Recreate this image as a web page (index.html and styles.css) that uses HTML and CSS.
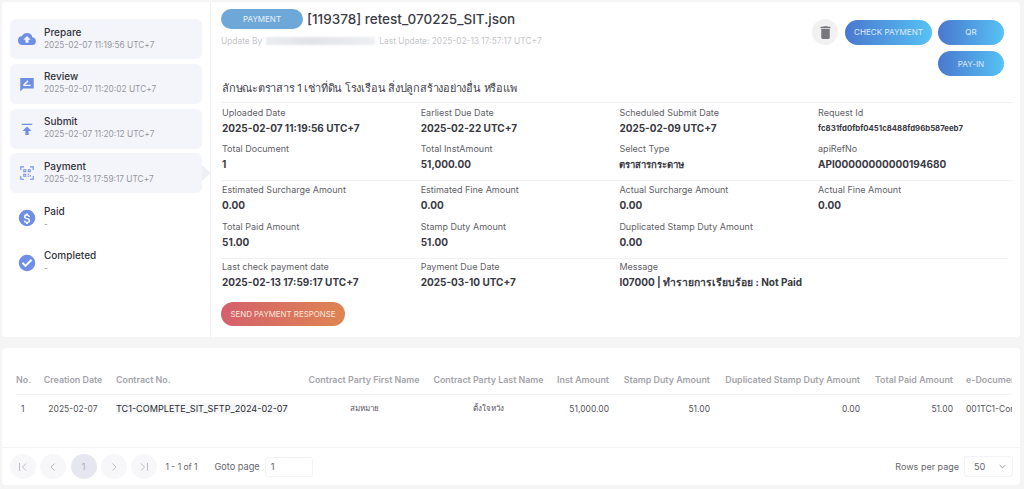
FILE: index.html
```html
<!DOCTYPE html>
<html lang="en">
<head>
<meta charset="utf-8">
<title>Payment</title>
<link rel="stylesheet" href="styles.css">
</head>
<body>
<section class="card top">
  <aside class="steps">
    <div class="step on">
      <svg class="ico" viewBox="0 0 24 24"><path d="M19.350 10.040A7.490 7.490 0 0 0 12 4a7.500 7.500 0 0 0-6.650 4.040A6 6 0 0 0 6 20h13a5 5 0 0 0 .35-9.960zM14 13v4h-4v-4H7l5-5 5 5h-3z"/></svg>
      <div class="step-text"><div class="step-name">Prepare</div><div class="step-time">2025-02-07 11:19:56 UTC+7</div></div>
    </div>
    <div class="step on">
      <svg class="ico" viewBox="0 0 24 24"><path d="M3 4h18v14H7l-4 4zM7 14.500h10V13H9.500l4.500-4.500-1.500-1.500L7 12.500z" fill-rule="evenodd"/></svg>
      <div class="step-text"><div class="step-name">Review</div><div class="step-time">2025-02-07 11:20:02 UTC+7</div></div>
    </div>
    <div class="step on">
      <svg class="ico" viewBox="0 0 24 24"><path d="M5 5h14v1.800H5zM12 8.500l-6 6h3.800V20h4.400v-5.500H18z"/></svg>
      <div class="step-text"><div class="step-name">Submit</div><div class="step-time">2025-02-07 11:20:12 UTC+7</div></div>
    </div>
    <div class="step on">
      <svg class="ico" viewBox="0 0 24 24"><path d="M3 8V3h5v1.500H4.500V8zM16 3h5v5h-1.500V4.500H16zM3 16h1.500v3.500H8V21H3zM21 16v5h-5v-1.500h3.500V16zM7 7h4v4H7zm1.200 1.200v1.600h1.600V8.200zM13 7h4v4h-4zm1.200 1.200v1.600h1.600V8.200zM7 13h4v4H7zm1.200 1.200v1.600h1.600v-1.600zM13 13h1.500v1.500H13zM15.500 14.500H17V17h-1.500zM13 15.500h1.500V17H13z"/></svg>
      <div class="step-text"><div class="step-name">Payment</div><div class="step-time">2025-02-13 17:59:17 UTC+7</div></div>
      <span class="arrow"></span>
    </div>
    <div class="step">
      <svg class="ico" viewBox="0 0 24 24"><path d="M12 1a11 11 0 1 0 0 22 11 11 0 0 0 0-22zm1.300 17.400V20h-2.500v-1.600c-1.600-.3-3-1.300-3.100-3.200h1.900c.1 1 .8 1.800 2.500 1.800 1.800 0 2.200-.9 2.200-1.500 0-.8-.4-1.500-2.500-2-2.300-.6-3.900-1.500-3.900-3.500 0-1.600 1.300-2.700 2.900-3V5.900h2.500v1.700c1.700.4 2.600 1.700 2.600 3.100h-1.900c-.1-1-.6-1.700-2-1.700-1.300 0-2.100.6-2.100 1.400 0 .8.600 1.200 2.500 1.700 1.900.5 3.900 1.300 3.900 3.700 0 1.700-1.300 2.700-3 3z"/></svg>
      <div class="step-text"><div class="step-name">Paid</div><div class="step-time">-</div></div>
    </div>
    <div class="step">
      <svg class="ico" viewBox="0 0 24 24"><path d="M12 1a11 11 0 1 0 0 22 11 11 0 0 0 0-22zm-2 16.500L5 12.500l1.800-1.800 3.200 3.200 7.200-7.200L19 8.500z"/></svg>
      <div class="step-text"><div class="step-name">Completed</div><div class="step-time">-</div></div>
    </div>
  </aside>
  <div class="main">
    <header class="head">
      <div class="head-left">
        <div class="title-row"><span class="badge">PAYMENT</span><h1 class="title">[119378] retest_070225_SIT.json</h1></div>
        <div class="update"><span>Update By</span><span class="redact"></span><span>Last Update: 2025-02-13 17:57:17 UTC+7</span></div>
      </div>
      <div class="actions">
        <div class="action-row">
          <span class="trash"><svg viewBox="0 0 24 24"><path d="M6 19a2 2 0 0 0 2 2h8a2 2 0 0 0 2-2V7H6zM19 4h-3.500l-1-1h-5l-1 1H5v2h14z"/></svg></span>
          <span class="btn blue check">CHECK PAYMENT</span>
          <span class="btn blue wide">QR</span>
        </div>
        <span class="btn blue wide">PAY-IN</span>
      </div>
    </header>
    <h2 class="doc">ลักษณะตราสาร 1 เช่าที่ดิน โรงเรือน สิ่งปลูกสร้างอย่างอื่น หรือแพ</h2>
    <div class="grid first">
      <div class="f"><div class="l">Uploaded Date</div><div class="v">2025-02-07 11:19:56 UTC+7</div></div>
      <div class="f"><div class="l">Earliest Due Date</div><div class="v">2025-02-22 UTC+7</div></div>
      <div class="f"><div class="l">Scheduled Submit Date</div><div class="v">2025-02-09 UTC+7</div></div>
      <div class="f"><div class="l">Request Id</div><div class="v small">fc831fd0fbf0451c8488fd96b587eeb7</div></div>
      <div class="f"><div class="l">Total Document</div><div class="v">1</div></div>
      <div class="f"><div class="l">Total InstAmount</div><div class="v">51,000.00</div></div>
      <div class="f"><div class="l">Select Type</div><div class="v"><span class="thai">ตราสารกระดาษ</span></div></div>
      <div class="f"><div class="l">apiRefNo</div><div class="v">API00000000000194680</div></div>
    </div>
    <div class="grid second">
      <div class="f"><div class="l">Estimated Surcharge Amount</div><div class="v">0.00</div></div>
      <div class="f"><div class="l">Estimated Fine Amount</div><div class="v">0.00</div></div>
      <div class="f"><div class="l">Actual Surcharge Amount</div><div class="v">0.00</div></div>
      <div class="f"><div class="l">Actual Fine Amount</div><div class="v">0.00</div></div>
      <div class="f"><div class="l">Total Paid Amount</div><div class="v">51.00</div></div>
      <div class="f"><div class="l">Stamp Duty Amount</div><div class="v">51.00</div></div>
      <div class="f"><div class="l">Duplicated Stamp Duty Amount</div><div class="v">0.00</div></div>
    </div>
    <div class="grid last">
      <div class="f"><div class="l">Last check payment date</div><div class="v">2025-02-13 17:59:17 UTC+7</div></div>
      <div class="f"><div class="l">Payment Due Date</div><div class="v">2025-03-10 UTC+7</div></div>
      <div class="f span2"><div class="l">Message</div><div class="v">I07000 | <span class="thai msg">ทำรายการเรียบร้อย</span> : Not Paid</div></div>
    </div>
    <div class="send"><span class="btn orange">SEND PAYMENT RESPONSE</span></div>
  </div>
</section>
<section class="card bottom">
  <div class="table">
    <div class="tr th">
      <span>No.</span><span class="c">Creation Date</span><span>Contract No.</span><span class="c">Contract Party First Name</span><span class="c">Contract Party Last Name</span><span class="r">Inst Amount</span><span class="r">Stamp Duty Amount</span><span class="r">Duplicated Stamp Duty Amount</span><span class="r">Total Paid Amount</span><span>e-Document</span>
    </div>
    <div class="tr td">
      <span class="n">1</span><span class="c">2025-02-07</span><span class="contract">TC1-COMPLETE_SIT_SFTP_2024-02-07</span><span class="c thai-cell">สมหมาย</span><span class="c thai-cell">ตั้งใจหวัง</span><span class="r">51,000.00</span><span class="r">51.00</span><span class="r">0.00</span><span class="r">51.00</span><span>001TC1-Complete</span>
    </div>
  </div>
  <footer class="pager">
    <span class="pg"><svg viewBox="0 0 10 10"><path d="M1.500 1v8M8 1.500L4.500 5 8 8.500"/></svg></span>
    <span class="pg"><svg viewBox="0 0 10 10"><path d="M6.500 1.500L3 5l3.500 3.500"/></svg></span>
    <span class="pg cur">1</span>
    <span class="pg"><svg viewBox="0 0 10 10"><path d="M3.500 1.500L7 5 3.500 8.500"/></svg></span>
    <span class="pg"><svg viewBox="0 0 10 10"><path d="M8.500 1v8M2 1.500L5.500 5 2 8.500"/></svg></span>
    <span class="count">1 - 1 of 1</span>
    <span class="goto">Goto page</span>
    <span class="input">1</span>
    <span class="rows">Rows per page</span>
    <span class="select">50<svg viewBox="0 0 10 6"><path d="M1 1l4 4 4-4" fill="none" stroke="#777" stroke-width="1"/></svg></span>
  </footer>
</section>
</body>
</html>
```
FILE: styles.css
```css
* { box-sizing: border-box; }
html, body { margin: 0; height: 489px; overflow: hidden; }
body {
  background: #f6f5f6;
  padding: 2px 4px 0 2px;
  font-family: Inter, "Noto Sans", "Noto Sans CJK SC", sans-serif;
  color: #3a3a44;
}
.card { background: #fff; border-radius: 4px; }
.top { display: flex; height: 335px; }
.bottom { margin-top: 11px; height: 137px; display: flex; flex-direction: column; }

.steps { width: 209px; height: 100%; border-right: 1px solid #f0f0f2; padding: 17px 8px 0; display: flex; flex-direction: column; gap: 4.800px; flex: none; }
.step { position: relative; height: 40px; display: flex; align-items: center; gap: 8px; padding-left: 8px; border-radius: 6px; }
.step.on { background: #f4f5fa; }
.step-text { padding-bottom: 2px; }
.ico { width: 18px; height: 18px; fill: #6f8fe6; flex: none; }
.step-name { font-size: 10px; font-weight: 500; line-height: 14px; color: #33333d; }
.step-time { font-size: 8.300px; line-height: 13px; color: #96979e; }
.arrow { position: absolute; left: 192px; top: 12px; border-left: 9px solid #eef0f6; border-top: 8px solid transparent; border-bottom: 8px solid transparent; }

.main { flex: 1; padding: 7px 8px 0 10px; min-width: 0; }
.head { display: flex; justify-content: space-between; height: 71px; }
.title-row { display: flex; align-items: center; gap: 4px; height: 20px; }
.badge { width: 82px; height: 20px; border-radius: 10px; background: #6ea8d8; color: #e8f2fb; font-size: 8px; display: flex; align-items: center; justify-content: center; }
.title { margin: 0; font-size: 13.500px; font-weight: 500; color: #3c3c46; white-space: nowrap; }
.update { display: flex; gap: 4px; margin-top: 5px; font-size: 8.400px; line-height: 14px; color: #c6c7cc; }
.redact { width: 109px; height: 8px; margin-top: 3px; background: linear-gradient(90deg, #ecedf0, #e2e3e8 40%, #eeeff2); filter: blur(1px); }
.actions { display: flex; flex-direction: column; align-items: flex-end; gap: 6px; padding: 10px 8px 0 0; }
.action-row { display: flex; align-items: center; gap: 6px; }
.trash { width: 26px; height: 26px; border-radius: 50%; background: #f1f1f2; margin-right: 1px; display: flex; align-items: center; justify-content: center; }
.trash svg { width: 17px; height: 17px; fill: #76767c; }
.btn { display: flex; align-items: center; justify-content: center; height: 25px; border-radius: 13px; font-size: 8.100px; white-space: nowrap; }
.blue { background: linear-gradient(90deg, #4a78cf, #56c2f4); color: #dfeafa; }
.check { width: 87px; }
.wide { width: 66px; }
.send { margin-top: 12px; }
.orange { width: 124px; height: 24px; font-size: 7.900px; background: linear-gradient(90deg, #d4606c, #de8552); color: #fbe6de; }

.doc { margin: 0; font-size: 11px; letter-spacing: -0.230px; font-weight: 400; line-height: 17px; color: #45454e; padding: 0 0 5px 1px; border-bottom: 1px solid #f0f0f2; }
.grid { display: grid; grid-template-columns: repeat(3, 198.700px) 1fr; row-gap: 6px; padding: 3px 0 8px 1px; border-bottom: 1px solid #f0f0f2; }
.second { padding-top: 2px; row-gap: 7px; margin-right: 4px; }
.last { border-bottom: 0; padding-top: 1px; padding-bottom: 0; }
.f { height: 30px; }
.span2 { grid-column: span 2; }
.l { font-size: 9px; line-height: 14px; color: #5f5f68; }
.v { font-size: 10px; font-weight: 700; line-height: 17px; color: #3a3a44; white-space: nowrap; }
.v.small { font-size: 7.800px; }
.thai { font-size: 9.500px; }
.thai.msg { font-size: 10.300px; }

.table { padding: 21px 8px 0 14px; height: 99px; overflow: hidden; }
.tr { display: grid; grid-template-columns: 14px 60px 179px 112px 111px 52px 88px 137px 80px 46px; column-gap: 13px; white-space: nowrap; overflow: hidden; }
.th { height: 26px; padding-bottom: 4px; font-size: 8.900px; font-weight: 600; color: #a4a4aa; border-bottom: 1px solid #f3f3f5; align-items: center; }
.td { height: 27px; font-size: 8.500px; color: #55555c; align-items: center; }
.tr span:last-child { overflow: hidden; }
.c { text-align: center; }
.r { text-align: right; }
.n { padding-left: 5px; }
.td .thai-cell { font-size: 8px; }
.td .contract { font-size: 9.100px; font-weight: 400; color: #2c2c32; background: #f6f7f9; width: fit-content; }

.pager { flex: 1; display: flex; align-items: center; border-top: 1px solid #f3f3f5; padding: 0 6px 0 8px; font-size: 9.200px; color: #66666c; }
.pg { width: 26px; height: 25px; border-radius: 50%; background: #f7f7f9; margin-right: 4.300px; display: flex; align-items: center; justify-content: center; color: #aaaab0; font-size: 9px; }
.pg svg { width: 10px; height: 10px; fill: none; stroke: #b4b4ba; stroke-width: 0.9; }
.pg.cur { background: #e5e6f0; }
.count { margin-left: 4px; width: 49px; font-size: 8.500px; }
.input { width: 48px; height: 20px; margin-left: 5px; border: 1px solid #f3f3f5; border-radius: 3px; padding: 0 5px; line-height: 18px; }
.rows { margin-left: auto; font-size: 9px; }
.select { display: flex; align-items: center; justify-content: space-between; width: 49px; height: 21px; margin: 0 1px 0 5px; padding: 0 6px 0 9px; border: 1px solid #f3f3f5; border-radius: 3px; }
.select svg { width: 7px; height: 5px; }
```
